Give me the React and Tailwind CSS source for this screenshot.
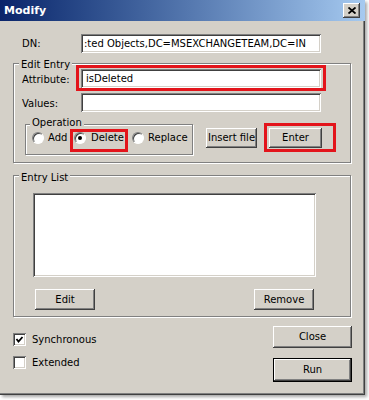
import React from 'react';

const raised = "bg-[#d4d0c8] shadow-[inset_-1px_-1px_#404040,inset_1px_1px_#ffffff,inset_-2px_-2px_#808080]";
const sunken = "bg-white shadow-[inset_1px_1px_#808080,inset_-1px_-1px_#ffffff,inset_2px_2px_#404040,inset_-2px_-2px_#d4d0c8]";
const group = "border border-[#808080] shadow-[inset_1px_1px_#ffffff,1px_1px_#ffffff]";

const Btn = ({ className = '', children }) => (
    <div className={`flex items-center justify-center ${raised} ${className}`}>{children}</div>
);

const Radio = ({ checked }) => (
    <div className="w-[12px] h-[12px] shrink-0 rounded-full bg-white border border-t-[#808080] border-l-[#808080] border-r-white border-b-white shadow-[inset_1px_1px_#404040] flex items-center justify-center">
        {checked && <div className="w-[4px] h-[4px] rounded-full bg-black" />}
    </div>
);

const Check = ({ checked, label }) => (
    <div className="flex items-center h-[13px]">
        <div className={`w-[13px] h-[13px] ${sunken} flex items-center justify-center`}>
            {checked && (
                <svg width="9" height="9" viewBox="0 0 9 9">
                    <polyline points="1.5,4 3.5,6.5 7.5,2" fill="none" stroke="#000" strokeWidth="1.8" />
                </svg>
            )}
        </div>
        <span className="ml-[6px]">{label}</span>
    </div>
);

const RedBox = ({ className }) => (
    <span className={`absolute border-[3px] border-[#e3141b] pointer-events-none ${className}`} />
);

export default function App() {
    return (
        <div className="w-[369px] h-[400px] bg-white overflow-hidden font-['DejaVu_Sans',sans-serif] text-[10px] leading-[12px] text-black">
            <div className="w-[365px] h-[395px] bg-[#d4d0c8] flex flex-col shadow-[inset_-1px_-1px_#404040,inset_-2px_-2px_#808080,2px_2px_3px_rgba(0,0,0,0.35)]">
                {/* title bar */}
                <div className="h-[21px] flex items-center justify-between pl-[4px] pr-[5px] bg-gradient-to-r from-[#0a246a] to-[#a6caf0]">
                    <span className="text-white font-bold text-[11px]">Modify</span>
                    <Btn className="w-[17px] h-[15px]">
                        <svg width="8" height="7" viewBox="0 0 8 7">
                            <path d="M0.5 0.5 L7.5 6.5 M7.5 0.5 L0.5 6.5" stroke="#000" strokeWidth="1.8" />
                        </svg>
                    </Btn>
                </div>

                {/* DN */}
                <div className="mt-[13px] flex items-center pl-[22px]">
                    <span className="w-[59px]">DN:</span>
                    <div className={`w-[240px] h-[19px] ${sunken} overflow-hidden px-[3px] flex items-center whitespace-nowrap`}>
                        :ted Objects,DC=MSEXCHANGETEAM,DC=IN
                    </div>
                </div>

                {/* Edit Entry */}
                <div className={`mt-[10px] ml-[13px] w-[338px] h-[100px] ${group}`}>
                    <span className="block w-fit -mt-[5px] ml-[5px] px-[2px] bg-[#d4d0c8]">Edit Entry</span>
                    <div className="-mt-[2px] pl-[8px] flex items-center">
                        <span className="w-[59px] mt-[2px]">Attribute:</span>
                        <div className="relative">
                            <div className={`w-[240px] h-[19px] ${sunken} px-[5px] flex items-center`}>isDeleted</div>
                            <RedBox className="-left-[5px] -right-[5px] -top-[4px] -bottom-[3px]" />
                        </div>
                    </div>
                    <div className="mt-[5px] pl-[8px] flex items-center">
                        <span className="w-[59px] mt-[2px]">Values:</span>
                        <div className={`w-[240px] h-[19px] ${sunken}`} />
                    </div>
                    <div className="mt-[12px] pl-[11px] flex items-start">
                        <div className={`w-[168px] h-[31px] ${group}`}>
                            <span className="block w-fit -mt-[8px] ml-[4px] px-[2px] bg-[#d4d0c8]">Operation</span>
                            <div className="mt-[3px] pl-[6px] flex items-center">
                                <div className="w-[42px] flex items-center">
                                    <Radio />
                                    <span className="ml-[4px]">Add</span>
                                </div>
                                <div className="w-[58px] flex items-center">
                                    <div className="relative flex items-center">
                                        <Radio checked />
                                        <span className="ml-[5px]">Delete</span>
                                        <RedBox className="-left-[4px] -right-[4px] -top-[3px] -bottom-[8px]" />
                                    </div>
                                </div>
                                <div className="flex items-center">
                                    <Radio />
                                    <span className="ml-[4px]">Replace</span>
                                </div>
                            </div>
                        </div>
                        <Btn className="ml-[13px] mt-[4px] w-[51px] h-[20px] whitespace-nowrap">Insert file</Btn>
                        <div className="relative ml-[12px] mt-[4px]">
                            <Btn className="w-[53px] h-[20px]">Enter</Btn>
                            <RedBox className="-left-[5px] -right-[14px] -top-[5px] -bottom-[4px]" />
                        </div>
                    </div>
                </div>

                {/* Entry List */}
                <div className={`mt-[12px] ml-[13px] w-[338px] h-[142px] ${group}`}>
                    <span className="block w-fit -mt-[4px] ml-[5px] px-[2px] bg-[#d4d0c8]">Entry List</span>
                    <div className={`mt-[9px] ml-[19px] w-[283px] h-[84px] ${sunken}`} />
                    <div className="mt-[12px] ml-[21px] w-[279px] flex justify-between">
                        <Btn className="w-[60px] h-[21px]">Edit</Btn>
                        <Btn className="w-[60px] h-[21px]">Remove</Btn>
                    </div>
                </div>

                {/* bottom */}
                <div className="mt-[9px] pl-[13px] pr-[13px] flex justify-between">
                    <div className="pt-[7px] flex flex-col gap-[10px]">
                        <Check checked label="Synchronous" />
                        <Check label="Extended" />
                    </div>
                    <div className="flex flex-col gap-[10px]">
                        <Btn className="w-[79px] h-[22px]">Close</Btn>
                        <div className="w-[79px] h-[24px] border border-black">
                            <Btn className="w-full h-full">Run</Btn>
                        </div>
                    </div>
                </div>
            </div>
        </div>
    );
}
